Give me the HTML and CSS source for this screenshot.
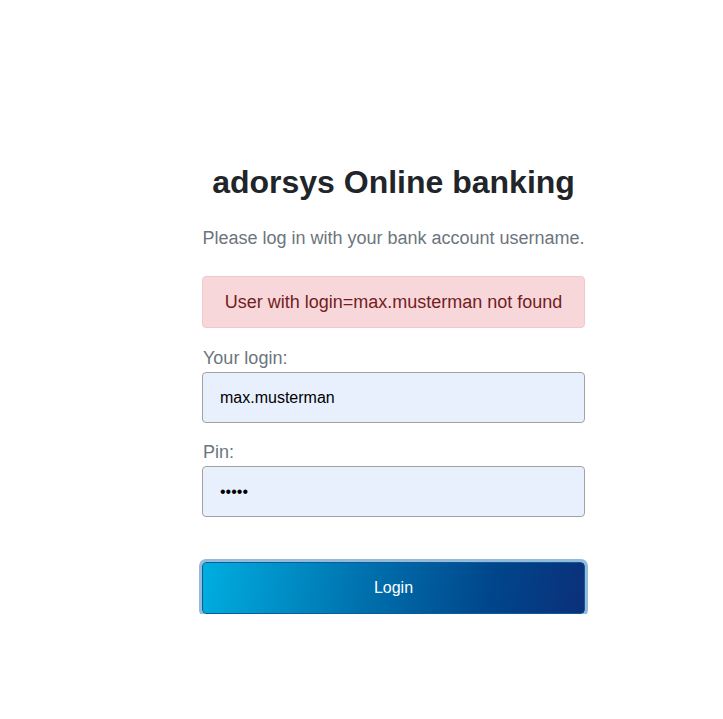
FILE: index.html
```html
<!DOCTYPE html>
<html lang="en">
<head>
<meta charset="utf-8">
<title>adorsys Online banking</title>
<link rel="stylesheet" href="styles.css">
</head>
<body>
<main class="page">
  <form class="login">
    <h1 class="title">adorsys Online banking</h1>
    <p class="intro">Please log in with your bank account username.</p>
    <div class="alert">User with login=max.musterman not found</div>
    <div class="field field-first">
      <label class="label" for="login">Your login:</label>
      <input class="input" id="login" type="text" value="max.musterman">
    </div>
    <div class="field">
      <label class="label" for="pin">Pin:</label>
      <input class="input" id="pin" type="password" value="12345">
    </div>
    <button class="btn" type="button">Login</button>
  </form>
</main>
</body>
</html>
```
FILE: styles.css
```css
* { box-sizing: border-box; }
html, body { margin: 0; padding: 0; background: #fff; }
body {
  font-family: "Liberation Sans", Arial, sans-serif;
  color: #212529;
}
.page {
  padding-top: 163px;
  padding-left: 202px;
}
.login {
  width: 383px;
  display: flex;
  flex-direction: column;
}
.title {
  margin: 0;
  font-size: 32px;
  line-height: 38px;
  font-weight: 700;
  text-align: center;
  color: #212529;
}
.intro {
  margin: 24px 0 0;
  font-size: 18px;
  line-height: 27px;
  text-align: center;
  color: #6c757d;
}
.alert {
  margin-top: 24px;
  padding: 12px 20px;
  font-size: 18px;
  line-height: 26px;
  text-align: center;
  color: #721c24;
  background: #f8d7da;
  border: 1px solid #f5c6cb;
  border-radius: 4px;
}
.field {
  display: flex;
  flex-direction: column;
  margin-top: 16px;
}
.field-first { margin-top: 17px; }
.label {
  font-size: 18px;
  line-height: 27px;
  color: #6c757d;
  padding-left: 1px;
}
.input {
  height: 51px;
  padding: 0 17px;
  font-family: "Liberation Sans", Arial, sans-serif;
  font-size: 16px;
  color: #000;
  background: #e8f0fe;
  border: 1px solid #a2a2a2;
  border-radius: 4px;
  outline: none;
}
.btn {
  margin-top: 45px;
  height: 52px;
  font-family: "Liberation Sans", Arial, sans-serif;
  font-size: 16px;
  color: #fff;
  background: linear-gradient(100deg, #00aee0 0%, #0074b0 40%, #00468c 75%, #0b3079 100%);
  border: 1px solid #0a5c9c;
  border-radius: 4px;
  box-shadow: 0 0 0 3px #94bbd9;
  cursor: pointer;
}
```
